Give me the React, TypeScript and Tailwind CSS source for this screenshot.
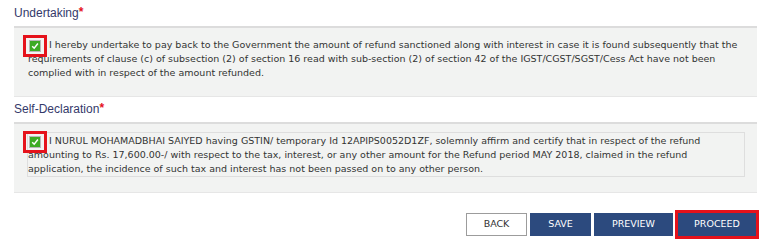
import type { ReactNode } from 'react'

const body = 'font-["DejaVu_Sans",Verdana,sans-serif] text-[9.5px] leading-[14px] text-[#333]'

function CheckMark() {
  return (
    <span className="relative inline-block align-[-2px] ml-[1px] mr-[8px]">
      <span className="flex h-[12px] w-[12px] items-center justify-center border border-[#b9b9b9] bg-[#3dab24]">
        <svg viewBox="0 0 10 10" className="h-[8px] w-[8px]">
          <path d="M1.5 5.2 L4 7.8 L8.6 1.8" fill="none" stroke="#fff" strokeWidth="1.8" />
        </svg>
      </span>
      {/* annotation box round the tick */}
      <span className="absolute -left-[6px] -right-[6px] -top-[5px] -bottom-[5px] border-[3px] border-[#e5121b]" />
    </span>
  )
}

function Heading({ children }: { children: ReactNode }) {
  return (
    <h4 className='font-["Liberation_Sans",Arial,sans-serif] text-[12px] leading-[16px] text-[#34396a]'>
      {children}
      <span className="relative -top-[1px] font-bold text-[#e5121b]">*</span>
    </h4>
  )
}

function Panel({ boxed, children }: { boxed?: boolean; children: ReactNode }) {
  return (
    <div className="mt-[5px] border-t-2 border-b border-t-[#dcdcdc] border-b-[#e6e6e6] bg-[#f2f3f2] pl-[13px] pr-[12px] pt-[8px] pb-[15px]">
      <div className={`border ${boxed ? 'border-[#dedede]' : 'border-transparent'} pt-px pb-0 ${body}`}>
        <CheckMark />
        {children}
      </div>
    </div>
  )
}

const btn = 'h-[23px] font-["DejaVu_Sans",Verdana,sans-serif] text-[9.5px] uppercase'

export default function App() {
  return (
    <div className="h-[245px] w-[768px] bg-white pl-[14px] pr-[11px] pt-[5px]">
      <Heading>Undertaking</Heading>
      <Panel>
        I hereby undertake to pay back to the Government the amount of refund sanctioned along with interest in case
        it is found subsequently that the requirements of clause (c) of subsection (2) of section 16 read with
        sub-section (2) of section 42 of the IGST/CGST/SGST/Cess Act have not been complied with in respect of the
        amount refunded.
      </Panel>

      <div className="mt-[4px]">
        <Heading>Self-Declaration</Heading>
      </div>
      <Panel boxed>
        I NURUL MOHAMADBHAI SAIYED having GSTIN/ temporary Id 12APIPS0052D1ZF, solemnly affirm and certify that in
        respect of the refund amounting to Rs. 17,600.00-/ with respect to the tax, interest, or any other amount for
        the Refund period MAY 2018, claimed in the refund application, the incidence of such tax and interest has not
        been passed on to any other person.
      </Panel>

      <div className="mt-[20px] flex justify-end gap-[3px] pr-[1px]">
        <button className={`${btn} w-[61px] border border-[#9c9c9c] bg-white text-[#333]`}>BACK</button>
        <button className={`${btn} w-[61px] bg-[#2c4a7e] text-white`}>SAVE</button>
        <button className={`${btn} w-[79px] bg-[#2c4a7e] text-white`}>PREVIEW</button>
        <button className={`${btn} relative ml-[2px] w-[78px] bg-[#2c4a7e] text-white`}>
          PROCEED
          <span className="absolute -inset-[3px] border-[3px] border-[#e5121b]" />
        </button>
      </div>
    </div>
  )
}
